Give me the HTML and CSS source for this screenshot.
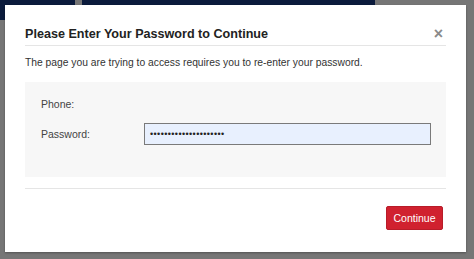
FILE: index.html
```html
<!DOCTYPE html>
<html>
<head>
<meta charset="utf-8">
<link rel="stylesheet" href="styles.css">
</head>
<body>
<div class="backdrop">
  <div class="topbar">
    <div class="blk blk-a"></div>
    <div class="blk blk-b"></div>
  </div>
</div>
<div class="modal">
  <div class="modal-header">
    <h1 class="modal-title">Please Enter Your Password to Continue</h1>
    <span class="close">&times;</span>
  </div>
  <p class="modal-desc">The page you are trying to access requires you to re-enter your password.</p>
  <div class="panel">
    <div class="row">
      <label class="lbl">Phone:</label>
    </div>
    <div class="row">
      <label class="lbl">Password:</label>
      <div class="input">&bull;&bull;&bull;&bull;&bull;&bull;&bull;&bull;&bull;&bull;&bull;&bull;&bull;&bull;&bull;&bull;&bull;&bull;&bull;&bull;&bull;</div>
    </div>
  </div>
  <div class="modal-footer">
    <button class="btn">Continue</button>
  </div>
</div>
</body>
</html>
```

FILE: styles.css
```css
html, body {
  margin: 0;
  padding: 0;
}
body {
  width: 474px;
  height: 259px;
  background: #767676;
  font-family: "Liberation Sans", Arial, sans-serif;
  overflow: hidden;
  position: relative;
}
.topbar {
  display: flex;
  height: 20px;
}
.blk {
  background: #0b1b3c;
  height: 100%;
}
.blk-a { width: 75px; }
.blk-b { width: 293px; margin-left: 7px; }
.modal {
  position: absolute;
  top: 5px;
  left: 5px;
  width: 461px;
  height: 247px;
  background: #fff;
  box-sizing: border-box;
  padding: 0 20px;
  box-shadow: 0 1px 2px rgba(0,0,0,0.3);
}
.modal-header {
  display: flex;
  justify-content: space-between;
  align-items: center;
  height: 16px;
  padding-top: 21px;
  padding-bottom: 3px;
  border-bottom: 1px solid #e5e5e5;
}
.modal-title {
  margin: 0;
  font-size: 12.6px;
  line-height: 16px;
  font-weight: bold;
  color: #222;
}
.close {
  font-size: 16px;
  font-weight: bold;
  color: #8a8a8a;
  margin-right: 3px;
  line-height: 1;
}
.modal-desc {
  margin: 0;
  padding-top: 11px;
  height: 25px;
  font-size: 10.3px;
  color: #333;
}
.panel {
  background: #f7f7f7;
  height: 95px;
  box-sizing: border-box;
  padding: 11px 15px 0 16px;
}
.row {
  display: flex;
  align-items: center;
  height: 22px;
  margin-bottom: 8px;
}
.lbl {
  width: 103px;
  font-size: 10.5px;
  color: #444;
}
.input {
  flex: 1;
  height: 22px;
  box-sizing: border-box;
  background: #e8f0fe;
  border: 1px solid #7a7a7a;
  font-size: 9px;
  letter-spacing: 0.4px;
  color: #222;
  display: flex;
  align-items: center;
  padding-left: 5px;
}
.modal-footer {
  margin-top: 11px;
  border-top: 1px solid #e5e5e5;
  display: flex;
  justify-content: flex-end;
  padding-top: 17px;
  padding-right: 3px;
}
.btn {
  background: #d0212f;
  color: #fff;
  border: 1px solid #b81c29;
  border-radius: 2px;
  font-family: "Liberation Sans", Arial, sans-serif;
  font-size: 10.5px;
  width: 57px;
  height: 24px;
  padding: 0;
}
```
